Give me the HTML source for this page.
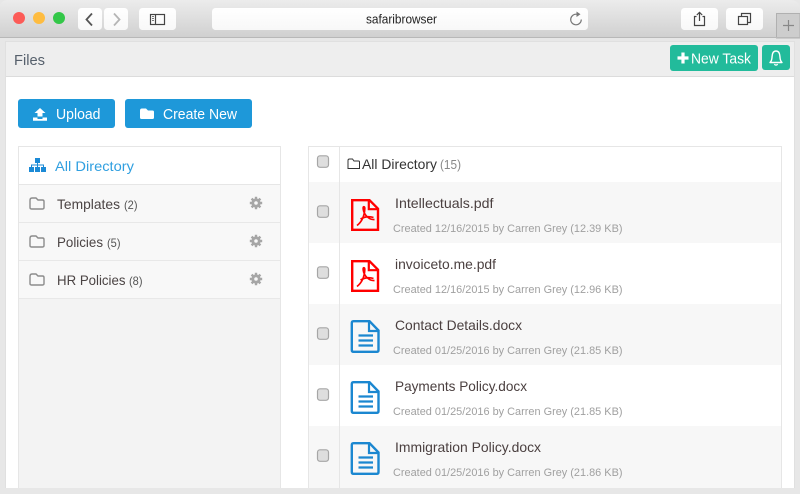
<!DOCTYPE html>
<html><head><meta charset="utf-8"><style>
html,body{margin:0;padding:0;background:#e7e7e7;width:800px;height:494px;overflow:hidden}
svg{display:block}
text{font-family:"Liberation Sans",sans-serif}
</style></head><body>
<svg width="800" height="494" viewBox="0 0 800 494" xmlns="http://www.w3.org/2000/svg">
<defs>
<linearGradient id="ch" x1="0" y1="0" x2="0" y2="1"><stop offset="0" stop-color="#ececec"/><stop offset="1" stop-color="#d0d0d0"/></linearGradient>
<linearGradient id="bt" x1="0" y1="0" x2="0" y2="1"><stop offset="0" stop-color="#ffffff"/><stop offset="1" stop-color="#f8f8f8"/></linearGradient>
<g id="pdf" fill="none" stroke="#ff0000">
<path d="M352.200 200.200H369.500L378 208.700V229.800H352.200Z" stroke-width="2.400"/>
<path d="M368.800 200V209.200H378" stroke-width="2.200"/>
<path d="M357 225.500C361.500 222 364.500 216 364.800 208.500C364.800 206 362.800 206 363.200 209C364 215 369 220 374.500 219.500M360.500 219C364.500 216.800 369 216 373.500 217.500" stroke-width="1.700"/>
</g>
<g id="doc" fill="none" stroke="#1b87d0">
<path d="M353.500 321.200H369.500L378.500 330.500V350Q378.500 351.800 376.700 351.800H353.500Q351.800 351.800 351.800 350V323Q351.800 321.200 353.500 321.200Z" stroke-width="2.400"/>
<path d="M369 321V331H378.500" stroke-width="2.200"/>
<path d="M358.500 335.500H373M358.500 340.500H373M358.500 345.500H373" stroke-width="2.200"/>
</g>
<g id="gear"><path d="M256 196.800V209.200M249.800 203H262.200M251.600 198.600L260.400 207.400M260.400 198.600L251.600 207.400" stroke="#a6a6a6" stroke-width="2.400"/>
<circle cx="256" cy="203" r="4.600" fill="#a6a6a6"/><circle cx="256" cy="203" r="1.800" fill="#f8f8f8"/></g>
<path id="folder" d="M30 200.500Q30 198 32 198H36L38 200H42.500Q44 200 44 201.500V207.500Q44 209 42.500 209H31.500Q30 209 30 207.500Z" fill="none" stroke="#8c8c8c" stroke-width="1.400"/>
<rect id="cb" x="317.500" y="205.800" width="11" height="11.500" rx="2.500" fill="#dedede" stroke="#a6a6a6" stroke-width="1.200"/>
</defs>

<rect width="800" height="494" fill="#e7e7e7"/>
<!-- browser chrome -->
<path d="M0 37V8Q0 0 8 0H790Q800 0 800 10V37Z" fill="url(#ch)"/>
<rect y="37" width="800" height="1" fill="#b8b8b8"/>
<circle cx="19" cy="18" r="6" fill="#fc5b57"/><circle cx="39" cy="18" r="6" fill="#febc40"/><circle cx="59" cy="18" r="6" fill="#33c748"/>
<rect x="78" y="8" width="24" height="22" rx="3.500" fill="url(#bt)"/>
<rect x="104" y="8" width="24" height="22" rx="3.500" fill="url(#bt)"/>
<path d="M92 13.500L86.500 19.500L92 25.500" fill="none" stroke="#555" stroke-width="1.800"/>
<path d="M114 13.500L119.500 19.500L114 25.500" fill="none" stroke="#b5b5b5" stroke-width="1.800"/>
<rect x="139" y="8" width="37" height="22" rx="3.500" fill="url(#bt)"/>
<rect x="150.500" y="14.500" width="14" height="10" fill="none" stroke="#444" stroke-width="1.200"/><path d="M155.500 14.500V24.500" stroke="#444" stroke-width="1.200"/><path d="M152 16.500H154M152 18.500H154M152 20.500H154" stroke="#777"/>
<rect x="212" y="8" width="376" height="22" rx="3.500" fill="url(#bt)"/>
<text x="366" y="23.500" font-size="12.500" fill="#222" textLength="71" lengthAdjust="spacingAndGlyphs">safaribrowser</text>
<path d="M577 14.300A5.300 5.300 0 1 0 581.300 19.500" fill="none" stroke="#777" stroke-width="1.200"/><path d="M576.500 11.500L580.500 14.300L576.500 17Z" fill="#777"/>
<rect x="681" y="8" width="37" height="22" rx="3.500" fill="url(#bt)"/>
<path d="M696.500 16.500H694.500V25.500H704.500V16.500H702.500" fill="none" stroke="#444" stroke-width="1.200"/><path d="M699.500 21V12.500M696.800 15L699.500 12.300L702.200 15" fill="none" stroke="#444" stroke-width="1.200"/>
<rect x="726" y="8" width="37" height="22" rx="3.500" fill="url(#bt)"/>
<path d="M741.500 16V13.500H750.500V22.500H748" fill="none" stroke="#444" stroke-width="1.200"/><rect x="738.500" y="16.500" width="9" height="8" fill="none" stroke="#444" stroke-width="1.200"/>
<path d="M776.500 38V13.500H800V38Z" fill="#cdcdcd" stroke="#b0b0b0"/>
<path d="M788.500 20V31M783 25.500H794" stroke="#888" stroke-width="1.200"/>
<rect y="37" width="800" height="1" fill="#b8b8b8"/>

<!-- panel -->
<rect x="5" y="41" width="789" height="447" fill="#ffffff"/>
<rect x="5" y="41" width="789" height="36" fill="#eeeeee"/>
<rect x="5" y="41" width="789" height="1" fill="#e0e0e0"/>
<rect x="5" y="76" width="789" height="1" fill="#dcdcdc"/>
<rect x="5" y="41" width="1" height="447" fill="#e0e0e0"/>
<rect x="794" y="41" width="1" height="447" fill="#e0e0e0"/>
<text x="14" y="65" font-size="15" fill="#56606c" textLength="31" lengthAdjust="spacingAndGlyphs">Files</text>

<rect x="670" y="45" width="88" height="26" rx="3" fill="#22bb9b"/>
<path d="M677.500 58H688.500M683 52.500V63.500" stroke="#fff" stroke-width="3.200"/>
<text x="691" y="63.500" font-size="14.500" fill="#fff" textLength="60" lengthAdjust="spacingAndGlyphs">New Task</text>
<rect x="762" y="45" width="28" height="25" rx="3" fill="#22bb9b"/>
<path d="M770 62.500C772.300 60.500 771.800 58 772.200 55.500C772.500 52.500 774 51 776 51C778 51 779.500 52.500 779.800 55.500C780.200 58 779.700 60.500 782 62.500Z" fill="none" stroke="#fff" stroke-width="1.400" stroke-linejoin="round"/>
<path d="M774.300 64.200Q776 66 777.700 64.200" fill="none" stroke="#fff" stroke-width="1.200"/>

<rect x="18" y="99" width="97" height="29" rx="3" fill="#1e98d9"/>
<path d="M40 108L45.500 113H42.500V116.500H37.500V113H34.500Z" fill="#fff"/>
<path d="M33 117.500H37.500V119H42.500V117.500H47V120.800H33Z" fill="#fff"/>
<text x="56" y="119" font-size="14.500" fill="#fff" textLength="44.500" lengthAdjust="spacingAndGlyphs">Upload</text>
<rect x="125" y="99" width="127" height="29" rx="3" fill="#1e98d9"/>
<path d="M140 110.500Q140 108.500 142 108.500H146L148 110.500H152.500Q154 110.500 154 112V117.500Q154 119 152.500 119H141.500Q140 119 140 117.500Z" fill="#fff"/>
<text x="163" y="119" font-size="14.500" fill="#fff" textLength="74" lengthAdjust="spacingAndGlyphs">Create New</text>

<!-- sidebar -->
<rect x="18.500" y="146.500" width="262" height="342" fill="#f3f3f3" stroke="#e6e6e6"/>
<rect x="19" y="147" width="261" height="37" fill="#ffffff"/>
<rect x="19" y="185" width="261" height="113" fill="#f8f8f8"/>
<rect x="19" y="184" width="261" height="1" fill="#e6e6e6"/>
<rect x="19" y="222" width="261" height="1" fill="#e8e8e8"/>
<rect x="19" y="260" width="261" height="1" fill="#e8e8e8"/>
<rect x="19" y="298" width="261" height="1" fill="#e8e8e8"/>
<g fill="#1b8ad6">
<rect x="35" y="158" width="5" height="5"/><rect x="29" y="167" width="5" height="5"/><rect x="35" y="167" width="5" height="5"/><rect x="41" y="167" width="5" height="5"/>
<path d="M37 163h1v1.500h6v2.500h-1v-1.500h-5v1.500h-1v-1.500h-5v1.500h-1v-2.500h6z"/>
</g>
<text x="55" y="171" font-size="14" fill="#2f9fe0" textLength="79" lengthAdjust="spacingAndGlyphs">All Directory</text>

<use href="#folder"/>
<text x="57" y="209" font-size="14" fill="#4b4444" textLength="63" lengthAdjust="spacingAndGlyphs">Templates</text>
<text x="124" y="209" font-size="12" fill="#555" textLength="13.500" lengthAdjust="spacingAndGlyphs">(2)</text>
<use href="#gear"/>

<use href="#folder" y="38"/>
<text x="57" y="247" font-size="14" fill="#4b4444" textLength="46" lengthAdjust="spacingAndGlyphs">Policies</text>
<text x="107" y="247" font-size="12" fill="#555" textLength="13.500" lengthAdjust="spacingAndGlyphs">(5)</text>
<use href="#gear" y="38"/>

<use href="#folder" y="76"/>
<text x="57" y="285" font-size="14" fill="#4b4444" textLength="68.500" lengthAdjust="spacingAndGlyphs">HR Policies</text>
<text x="129" y="285" font-size="12" fill="#555" textLength="13.500" lengthAdjust="spacingAndGlyphs">(8)</text>
<use href="#gear" y="76"/>

<!-- table -->
<rect x="308.500" y="146.500" width="473" height="342" fill="#fff" stroke="#e6e6e6"/>
<rect x="309" y="182" width="472" height="61" fill="#f7f7f7"/>
<rect x="309" y="304" width="472" height="61" fill="#f7f7f7"/>
<rect x="309" y="426" width="472" height="62" fill="#f7f7f7"/>
<rect x="339" y="147" width="1" height="341" fill="#e6e6e6"/>

<use href="#cb" y="-50"/>
<path d="M348 160.500Q348 159 349.500 159H352.500L354 161H358.500Q359.500 161 359.500 162V168.500H348Z" fill="none" stroke="#333" stroke-width="1"/>
<text x="362" y="169" font-size="14" fill="#333" textLength="75" lengthAdjust="spacingAndGlyphs">All Directory</text>
<text x="440" y="169" font-size="12.500" fill="#888" textLength="21" lengthAdjust="spacingAndGlyphs">(15)</text>

<use href="#cb"/>
<use href="#pdf"/>
<text x="395" y="208" font-size="14" fill="#4b4040" textLength="98.500" lengthAdjust="spacingAndGlyphs">Intellectuals.pdf</text>
<text x="393" y="232" font-size="11" fill="#a0a0a0" textLength="229.500" lengthAdjust="spacingAndGlyphs">Created 12/16/2015 by Carren Grey (12.39 KB)</text>

<use href="#cb" y="61"/>
<use href="#pdf" y="61"/>
<text x="395" y="269" font-size="14" fill="#4b4040" textLength="101" lengthAdjust="spacingAndGlyphs">invoiceto.me.pdf</text>
<text x="393" y="293" font-size="11" fill="#a0a0a0" textLength="229.500" lengthAdjust="spacingAndGlyphs">Created 12/16/2015 by Carren Grey (12.96 KB)</text>

<use href="#cb" y="122"/>
<use href="#doc"/>
<text x="395" y="330" font-size="14" fill="#4b4040" textLength="127" lengthAdjust="spacingAndGlyphs">Contact Details.docx</text>
<text x="393" y="354" font-size="11" fill="#a0a0a0" textLength="229.500" lengthAdjust="spacingAndGlyphs">Created 01/25/2016 by Carren Grey (21.85 KB)</text>

<use href="#cb" y="183"/>
<use href="#doc" y="61"/>
<text x="395" y="391" font-size="14" fill="#4b4040" textLength="132" lengthAdjust="spacingAndGlyphs">Payments Policy.docx</text>
<text x="393" y="415" font-size="11" fill="#a0a0a0" textLength="229.500" lengthAdjust="spacingAndGlyphs">Created 01/25/2016 by Carren Grey (21.85 KB)</text>

<use href="#cb" y="244"/>
<use href="#doc" y="122"/>
<text x="395" y="452" font-size="14" fill="#4b4040" textLength="146" lengthAdjust="spacingAndGlyphs">Immigration Policy.docx</text>
<text x="393" y="476" font-size="11" fill="#a0a0a0" textLength="229.500" lengthAdjust="spacingAndGlyphs">Created 01/25/2016 by Carren Grey (21.86 KB)</text>

<rect x="0" y="488" width="800" height="6" fill="#e7e7e7"/>
</svg>
</body></html>
